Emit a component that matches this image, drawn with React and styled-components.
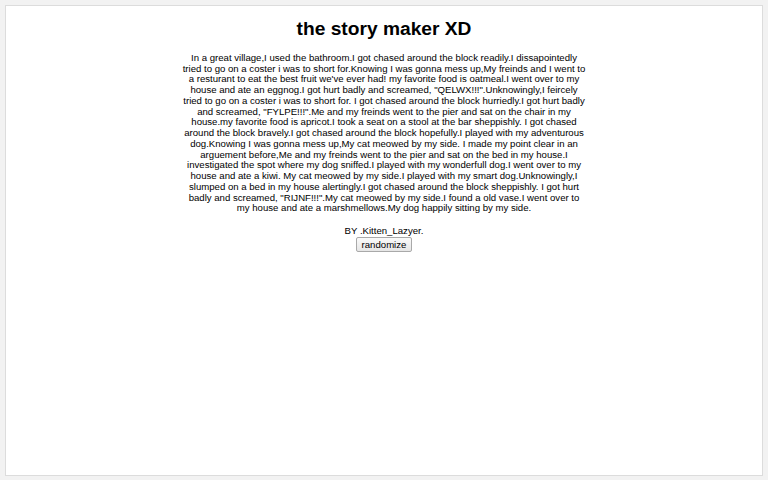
import React, { useState } from "react";
import styled, { createGlobalStyle } from "styled-components";

const Global = createGlobalStyle`
  html, body { margin: 0; padding: 0; }
  body {
    background: #f2f2f2;
    font-family: "Liberation Sans", Arial, sans-serif;
    color: #000;
  }
`;

const Frame = styled.div`
  box-sizing: border-box;
  margin: 5px 5px 0 5px;
  height: 471px;
  background: #fff;
  border: 1px solid #dcdcdc;
  display: flex;
  flex-direction: column;
  align-items: center;
`;

const Title = styled.h1`
  margin: 12px 0 0 0;
  font-size: 19.2px;
  font-weight: bold;
  line-height: 22px;
`;

const Story = styled.p`
  width: 404px;
  margin: 13px 0 0 0;
  font-size: 9.6px;
  line-height: 10.73px;
  text-align: center;
`;

const Byline = styled.div`
  margin-top: 12px;
  font-size: 9.6px;
  line-height: 10.73px;
  text-align: center;
`;

const Button = styled.button`
  font-family: "Liberation Sans", Arial, sans-serif;
  font-size: 9.6px;
  line-height: 11px;
  padding: 1px 5px;
  color: #000;
  background: linear-gradient(#fafafa, #e6e6e6);
  border: 1px solid #a9a9a9;
  border-radius: 2px;
  cursor: pointer;
`;

const story =
  "In a great village,I used the bathroom.I got chased around the block readily.I dissapointedly tried to go on a coster i was to short for.Knowing I was gonna mess up,My freinds and I went to a resturant to eat the best fruit we've ever had! my favorite food is oatmeal.I went over to my house and ate an eggnog.I got hurt badly and screamed, \"QELWX!!!\".Unknowingly,I feircely tried to go on a coster i was to short for. I got chased around the block hurriedly.I got hurt badly and screamed, \"FYLPE!!!\".Me and my freinds went to the pier and sat on the chair in my house.my favorite food is apricot.I took a seat on a stool at the bar sheppishly. I got chased around the block bravely.I got chased around the block hopefully.I played with my adventurous dog.Knowing I was gonna mess up,My cat meowed by my side. I made my point clear in an arguement before,Me and my freinds went to the pier and sat on the bed in my house.I investigated the spot where my dog sniffed.I played with my wonderfull dog.I went over to my house and ate a kiwi. My cat meowed by my side.I played with my smart dog.Unknowingly,I slumped on a bed in my house alertingly.I got chased around the block sheppishly. I got hurt badly and screamed, \"RIJNF!!!\".My cat meowed by my side.I found a old vase.I went over to my house and ate a marshmellows.My dog happily sitting by my side.";

export default function App() {
  const [text] = useState(story);
  return (
    <>
      <Global />
      <Frame>
        <Title>the story maker XD</Title>
        <Story>{text}</Story>
        <Byline>BY .Kitten_Lazyer.</Byline>
        <Button>randomize</Button>
      </Frame>
    </>
  );
}
